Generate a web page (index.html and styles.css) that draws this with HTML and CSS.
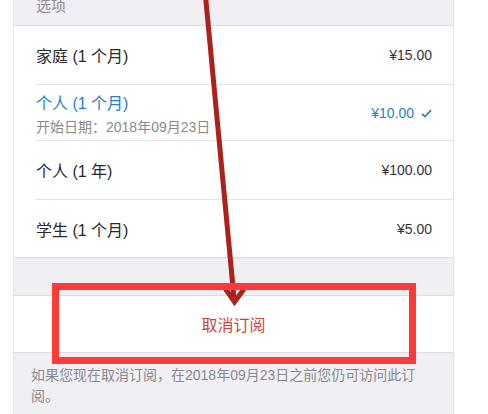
FILE: index.html
```html
<!DOCTYPE html>
<html>
<head lang="zh">
    <meta charset="UTF-8">
    <title>选项</title>
    <link rel="stylesheet" href="styles.css">
</head>
<body>
<div class="screen">
    <!--分组标题-->
    <div class="section-head">选项</div>
    <ul class="group">
        <li class="row">
            <span class="name">家庭 (1 个月)</span>
            <span class="price">¥15.00</span>
        </li>
        <li class="row current">
            <div>
                <div class="name">个人 (1 个月)</div>
                <div class="sub">开始日期：2018年09月23日</div>
            </div>
            <span class="price">¥10.00
                <svg class="check" width="11" height="9" viewBox="0 0 11 9"><path d="M1 4.8 L4 7.6 L10 1.2" fill="none" stroke="#2a7fc2" stroke-width="1.8"/></svg>
            </span>
        </li>
        <li class="row">
            <span class="name">个人 (1 年)</span>
            <span class="price">¥100.00</span>
        </li>
        <li class="row">
            <span class="name">学生 (1 个月)</span>
            <span class="price">¥5.00</span>
        </li>
    </ul>
    <div class="gap"></div>
    <div class="cancel">取消订阅</div>
    <p class="note">如果您现在取消订阅，在2018年09月23日之前您仍可访问此订阅。</p>
</div>
<!--标注-->
<div class="mark"></div>
<svg class="arrow" width="488" height="414" viewBox="0 0 488 414">
    <path d="M205.5 -4 L234 298" fill="none" stroke="#ab211b" stroke-width="5"/>
    <path d="M225 288 L234.5 302 L244 289" fill="none" stroke="#ab211b" stroke-width="5"/>
</svg>
</body>
</html>
```
FILE: styles.css
```css
body{
    margin: 0;
    background-color: #fff;
    font-family: "Liberation Sans", "Noto Sans CJK SC", sans-serif;
    overflow: hidden;
}
.screen{
    margin-left: 13px;
    width: 441px;
    height: 414px;
    box-sizing: border-box;
    border-left: 1px solid #e4e4e8;
    border-right: 1px solid #e4e4e8;
    background-color: #efeff4;
}
/*分组标题*/
.section-head{
    height: 25px;
    box-sizing: border-box;
    padding: 0 22px;
    font-size: 15px;
    line-height: 12px;
    color: #8e8e93;
}
.group{
    list-style: none;
    margin: 0;
    padding: 0;
    background-color: #fff;
    border-top: 1px solid #dcdce0;
    border-bottom: 1px solid #dcdce0;
}
.row{
    display: flex;
    align-items: center;
    justify-content: space-between;
    height: 59px;
    box-sizing: border-box;
    margin-left: 22px;
    padding-right: 21px;
    border-bottom: 1px solid #e3e3e7;
}
.row.current{
    height: 56px;
}
.row:last-child{
    border-bottom: none;
    height: 57px;
}
.name{
    font-size: 16px;
    color: #2a2a2a;
}
.price{
    font-size: 14px;
    color: #333;
}
.current .name,
.current .price{
    color: #2a7fc2;
}
.sub{
    font-size: 14px;
    color: #8a8a8e;
    margin-top: 2px;
}
.check{
    margin-left: 3px;
    vertical-align: 0;
}
.gap{
    height: 37px;
}
.cancel{
    height: 58px;
    box-sizing: border-box;
    display: flex;
    align-items: center;
    justify-content: center;
    background-color: #fff;
    border-top: 1px solid #dcdce0;
    border-bottom: 1px solid #dcdce0;
    font-size: 16px;
    color: #c8463e;
}
.note{
    margin: 0;
    padding: 12px 30px 0 17px;
    font-size: 14px;
    line-height: 21px;
    color: #8a8a8e;
}
/*红框*/
.mark{
    position: absolute;
    left: 52px;
    top: 283px;
    width: 364px;
    height: 81px;
    box-sizing: border-box;
    border: 7px solid #fb3a3a;
    z-index: 2;
}
.arrow{
    position: absolute;
    left: 0;
    top: 0;
    z-index: 1;
}
```
